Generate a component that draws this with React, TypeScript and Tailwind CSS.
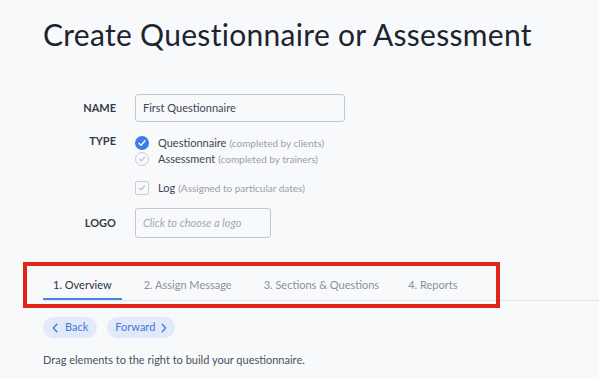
import React from "react";

const Check = ({ color }: { color: string }) => (
  <svg viewBox="0 0 14 14" className="w-[14px] h-[14px]">
    <path d="M4 7.3 L6.1 9.3 L10 4.8" fill="none" stroke={color} strokeWidth="1.3" strokeLinecap="round" strokeLinejoin="round" />
  </svg>
);

const Option = ({ kind, title, note }: { kind: "on" | "off" | "box"; title: string; note: string }) => (
  <div className="flex items-center h-[16px]">
    {kind === "on" && (
      <div className="w-[14px] h-[14px] rounded-full bg-[#3b7de9] flex items-center justify-center">
        <Check color="#ffffff" />
      </div>
    )}
    {kind === "off" && (
      <div className="w-[14px] h-[14px] rounded-full border border-[#c9ccd2] flex items-center justify-center">
        <Check color="#b8bcc4" />
      </div>
    )}
    {kind === "box" && (
      <div className="w-[14px] h-[14px] rounded-[2px] border border-[#c9ccd2] flex items-center justify-center">
        <Check color="#b8bcc4" />
      </div>
    )}
    <span className="ml-[9px] text-[11px] text-[#3f4652]">{title}</span>
    <span className="ml-[3px] text-[10px] text-[#9aa0aa]">{note}</span>
  </div>
);

export default function App() {
  return (
    <div
      className="relative w-[599px] h-[379px] overflow-hidden bg-[#f8f9fb] text-[#1f2633]"
      style={{ fontFamily: "Lato, 'Noto Sans', sans-serif" }}
    >
      <div className="pl-[43px] pt-[14px]">
        <h1 className="text-[30px] leading-[40px] font-normal text-[#1d2430] tracking-[0.3px]">
          Create Questionnaire or Assessment
        </h1>
      </div>

      <div className="mt-[40px] grid grid-cols-[116px_1fr] gap-x-[19px]">
        <div className="flex items-center justify-end h-[28px] text-[11px] font-bold text-[#353c48]">NAME</div>
        <div className="w-[210px] h-[28px] border border-[#c3c7ce] rounded-[3px] flex items-center px-[7px] text-[11px] text-[#3f4652]">
          First Questionnaire
        </div>

        <div className="mt-[12px] h-[14px] flex items-center justify-end text-[11px] font-bold text-[#353c48]">TYPE</div>
        <div className="mt-[13px] flex flex-col">
          <Option kind="on" title="Questionnaire" note="(completed by clients)" />
          <Option kind="off" title="Assessment" note="(completed by trainers)" />
          <div className="mt-[13px]">
            <Option kind="box" title="Log" note="(Assigned to particular dates)" />
          </div>
        </div>

        <div className="mt-[12px] flex items-center justify-end h-[30px] text-[11px] font-bold text-[#353c48]">LOGO</div>
        <div className="mt-[12px] w-[136px] h-[30px] border border-[#c3c7ce] rounded-[3px] flex items-center px-[7px] text-[11px] italic text-[#a3a8b1]">
          Click to choose a logo
        </div>
      </div>

      <div className="mt-[24px] ml-[43px] flex border-b border-[#e3e5e9] text-[11px]">
        <div className="px-[10px] h-[38px] pt-[15px] text-[#2a313c] border-b-2 border-[#4a86e8] -mb-px">1. Overview</div>
        <div className="ml-[12px] px-[10px] h-[38px] pt-[15px] text-[#8a919c]">2. Assign Message</div>
        <div className="ml-[12px] px-[10px] h-[38px] pt-[15px] text-[#8a919c]">3. Sections &amp; Questions</div>
        <div className="ml-[9px] px-[10px] h-[38px] pt-[15px] text-[#8a919c]">4. Reports</div>
      </div>

      <div className="mt-[16px] ml-[43px] flex gap-[10px]">
        <div className="h-[21px] px-[9px] rounded-full bg-[#e2e9f8] flex items-center text-[11px] text-[#3f78e0]">
          <svg viewBox="0 0 6 10" className="w-[6px] h-[10px] mr-[7px]">
            <path d="M4.8 1.2 L1.3 5 L4.8 8.8" fill="none" stroke="#3f78e0" strokeWidth="1.3" strokeLinecap="round" strokeLinejoin="round" />
          </svg>
          Back
        </div>
        <div className="h-[21px] px-[8px] rounded-full bg-[#e2e9f8] flex items-center text-[11px] text-[#3f78e0]">
          Forward
          <svg viewBox="0 0 6 10" className="w-[6px] h-[10px] ml-[6px]">
            <path d="M1.2 1.2 L4.7 5 L1.2 8.8" fill="none" stroke="#3f78e0" strokeWidth="1.3" strokeLinecap="round" strokeLinejoin="round" />
          </svg>
        </div>
      </div>

      <div className="mt-[14px] ml-[43px] text-[11px] text-[#4a515c]">Drag elements to the right to build your questionnaire.</div>

      <div className="absolute left-[23px] top-[262px] w-[477px] h-[46px] border-[4px] border-[#e0261b] pointer-events-none" />
    </div>
  );
}
